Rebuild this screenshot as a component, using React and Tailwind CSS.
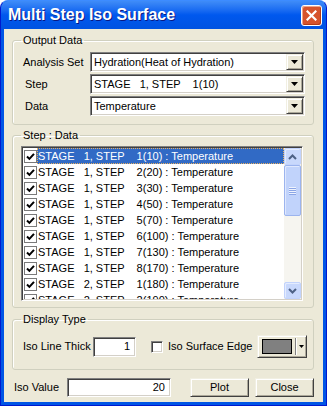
import React from 'react';

const rows = [
  ['1', '1(10)'],
  ['1', '2(20)'],
  ['1', '3(30)'],
  ['1', '4(50)'],
  ['1', '5(70)'],
  ['1', '6(100)'],
  ['1', '7(130)'],
  ['1', '8(170)'],
  ['2', '1(180)'],
  ['2', '2(190)'],
];

const sunken =
  'border border-t-[#808080] border-l-[#808080] border-b-white border-r-white shadow-[inset_1px_1px_#404040,inset_-1px_-1px_#d4d0c8]';
const raised =
  'border border-t-[#f1efe2] border-l-[#f1efe2] border-b-[#404040] border-r-[#404040] shadow-[inset_1px_1px_#ffffff,inset_-1px_-1px_#aca899]';

const Arrow = () => (
  <svg width="7" height="4" viewBox="0 0 7 4">
    <path d="M0 0h7L3.5 4z" fill="#000" />
  </svg>
);

const Combo = ({ text }) => (
  <div className={`h-[20px] flex items-stretch bg-white ${sunken}`}>
    <div className="flex-1 pl-[3px] flex items-center whitespace-pre">{text}</div>
    <div className={`w-[17px] m-px bg-[#ece9d8] flex items-center justify-center ${raised}`}>
      <Arrow />
    </div>
  </div>
);

const Check = () => (
  <div className="w-[13px] h-[13px] border border-[#7a7a7a] bg-white flex items-center justify-center shrink-0">
    <svg width="9" height="9" viewBox="0 0 9 9">
      <path d="M1 4.5l2.4 2.4L8 1.8" fill="none" stroke="#000" strokeWidth="2" />
    </svg>
  </div>
);

const ScrollBtn = ({ down }) => (
  <div className="h-[17px] rounded-[2px] border border-[#c2d3fc] bg-[#c8d8fc] shadow-[inset_1px_1px_#e4ecfe] flex items-center justify-center">
    <svg width="9" height="6" viewBox="0 0 9 6">
      <path
        d={down ? 'M1 1l3.5 3.5L8 1' : 'M1 5l3.5-3.5L8 5'}
        fill="none"
        stroke="#4d6185"
        strokeWidth="2"
      />
    </svg>
  </div>
);

const Group = ({ title, children, className = '' }) => (
  <fieldset className={`border border-[#d0d0bf] rounded-[3px] shadow-[inset_1px_1px_#fff] ${className}`}>
    <legend className="ml-[8px] px-[2px] leading-[13px]">{title}</legend>
    {children}
  </fieldset>
);

export default function App() {
  return (
    <div className="w-[327px] h-[406px] bg-white font-['Liberation_Sans',Arial,sans-serif] text-[11px] text-black">
      <div className="w-full h-full rounded-t-[8px] bg-[#0055e5] border border-[#0019cf] border-t-[#3d8cff] flex flex-col">
        <div className="h-[28px] rounded-t-[7px] bg-gradient-to-b from-[#3f8cf7] via-[#0058ee] to-[#0053e1] flex items-center justify-between pl-[7px] pr-[4px]">
          <span className="text-white font-bold text-[16px] [text-shadow:1px_1px_#0a1883]">Multi Step Iso Surface</span>
          <div className="w-[21px] h-[21px] rounded-[3px] border border-white bg-[#d6532c] shadow-[inset_1px_1px_#eea58a,inset_-1px_-1px_#b23a16] flex items-center justify-center">
            <svg width="11" height="11" viewBox="0 0 11 11">
              <path d="M1.5 1.5l8 8M9.5 1.5l-8 8" stroke="#fff" strokeWidth="2.2" strokeLinecap="square" />
            </svg>
          </div>
        </div>
        <div className="flex-1 mx-[3px] mb-[3px] bg-[#ece9d8] flex flex-col px-[8px] pt-[5px]">
          <Group title="Output Data" className="w-[302px]">
            <div className="grid grid-cols-[67px_215px] gap-y-[2px] pl-[10px] pt-[5px] pb-[8px] items-center">
              <span>Analysis Set</span>
              <Combo text="Hydration(Heat of Hydration)" />
              <span className="pl-[2px]">Step</span>
              <Combo text="STAGE   1, STEP    1(10)" />
              <span className="pl-[2px]">Data</span>
              <Combo text="Temperature" />
            </div>
          </Group>

          <Group title="Step : Data" className="w-[302px] mt-[4px]">
            <div className="pl-[8px] pt-[4px] pb-[6px]">
              <div className={`w-[282px] h-[155px] bg-white flex ${sunken} p-px`}>
                <div className="flex-1 overflow-hidden pl-px">
                  {rows.map(([s, st], i) => (
                    <div key={i} className="h-[16px] flex items-center">
                      <Check />
                      <div
                        className={`flex-1 h-full flex items-center whitespace-pre pl-px ${
                          i === 0 ? 'bg-[#316ac5] text-white outline outline-1 outline-dotted outline-offset-[-1px] outline-[#e8b060]' : ''
                        }`}
                      >
                        {`STAGE   ${s}, STEP    ${st} : Temperature`}
                      </div>
                    </div>
                  ))}
                </div>
                <div className="w-[17px] flex flex-col bg-[#f6f5f0]">
                  <ScrollBtn />
                  <div className="h-[51px] rounded-[2px] border border-[#9cb4ee] bg-[#c1d3fb] shadow-[inset_1px_1px_#dfe8fe] flex flex-col items-center justify-center gap-[1px]">
                    {[0, 1, 2, 3].map((k) => (
                      <div key={k} className="w-[7px] h-px bg-[#eef3fe] shadow-[0_1px_#8ca6e6]" />
                    ))}
                  </div>
                  <div className="flex-1" />
                  <ScrollBtn down />
                </div>
              </div>
            </div>
          </Group>

          <Group title="Display Type" className="w-[302px] mt-[5px]">
            <div className="flex items-center pl-[10px] pt-[4px] pb-[6px] h-[33px] box-content">
              <span className="w-[70px]">Iso Line Thick</span>
              <div className={`w-[43px] h-[20px] bg-white flex items-center justify-end pr-[5px] ${sunken}`}>1</div>
              <div className={`ml-[15px] w-[12px] h-[12px] bg-white ${sunken}`} />
              <span className="ml-[5px] w-[89px]">Iso Surface Edge</span>
              <div className={`w-[50px] h-[23px] bg-[#ece9d8] flex items-center pl-[4px] ${raised}`}>
                <div className="w-[30px] h-[15px] bg-[#808080] border border-black" />
                <div className="ml-[3px] w-px h-[17px] bg-[#808080] shadow-[1px_0_#fff]" />
                <div className="ml-[3px] flex items-center">
                  <svg width="5" height="3" viewBox="0 0 5 3">
                    <path d="M0 0h5L2.5 3z" fill="#000" />
                  </svg>
                </div>
              </div>
            </div>
          </Group>

          <div className="flex items-center mt-[8px] pl-[2px]">
            <span className="w-[53px]">Iso Value</span>
            <div className={`w-[104px] h-[19px] bg-white flex items-center justify-end pr-[5px] ${sunken}`}>20</div>
            <button className={`ml-[19px] w-[59px] h-[19px] bg-[#ece9d8] ${raised}`}>Plot</button>
            <button className={`ml-[6px] w-[59px] h-[19px] bg-[#ece9d8] ${raised}`}>Close</button>
          </div>
        </div>
      </div>
    </div>
  );
}
